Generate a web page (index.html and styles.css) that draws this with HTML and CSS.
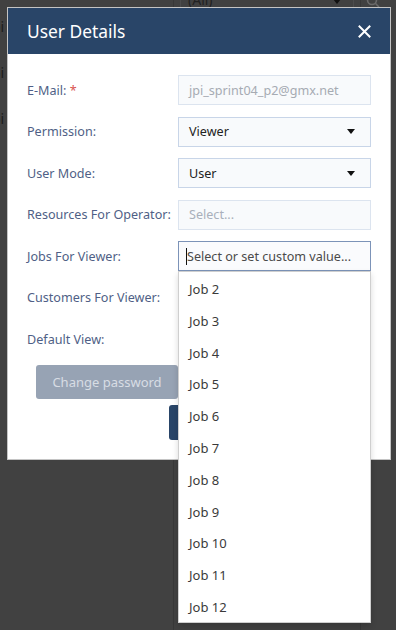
FILE: index.html
```html
<!DOCTYPE html>
<html>
<head>
<meta charset="utf-8">
<link rel="stylesheet" href="styles.css">
</head>
<body>
<div class="page">
  <div class="bg">
    <div class="bg-left">
      <span>pi</span>
      <span>pi</span>
      <span>pi</span>
    </div>
    <div class="bg-filter">
      <div class="bg-select">
        <span>(All)</span>
        <span class="bg-caret"></span>
      </div>
    </div>
    <div class="bg-search">
      <svg width="14" height="14" viewBox="0 0 14 14"><circle cx="6" cy="6" r="4.5" fill="none" stroke="#6a6a6a" stroke-width="1.6"/><line x1="9.3" y1="9.3" x2="13" y2="13" stroke="#6a6a6a" stroke-width="1.6"/></svg>
    </div>
  </div>

  <div class="modal">
    <div class="modal-header">
      <span class="modal-title">User Details</span>
      <svg class="close" width="13" height="13" viewBox="0 0 13 13"><path d="M1.5 1.5 L11.5 11.5 M11.5 1.5 L1.5 11.5" stroke="#ffffff" stroke-width="2" stroke-linecap="square"/></svg>
    </div>
    <div class="modal-body">
      <div class="row">
        <label class="label">E-Mail: <span class="req">*</span></label>
        <div class="field disabled">jpi_sprint04_p2@gmx.net</div>
      </div>
      <div class="row">
        <label class="label">Permission:</label>
        <div class="field select"><span>Viewer</span><span class="caret"></span></div>
      </div>
      <div class="row">
        <label class="label">User Mode:</label>
        <div class="field select"><span>User</span><span class="caret"></span></div>
      </div>
      <div class="row">
        <label class="label">Resources For Operator:</label>
        <div class="field placeholder">Select...</div>
      </div>
      <div class="row">
        <label class="label">Jobs For Viewer:</label>
        <div class="field focused"><span class="cursor"></span>Select or set custom value...</div>
      </div>
      <div class="row">
        <label class="label">Customers For Viewer:</label>
        <div class="field"></div>
      </div>
      <div class="row">
        <label class="label">Default View:</label>
        <div class="field"></div>
      </div>
      <div class="actions">
        <button class="btn btn-muted">Change password</button>
      </div>
      <div class="actions second">
        <button class="btn btn-primary" aria-label="Save"></button>
      </div>
    </div>
  </div>

  <ul class="dropdown">
    <li>Job 2</li>
    <li>Job 3</li>
    <li>Job 4</li>
    <li>Job 5</li>
    <li>Job 6</li>
    <li>Job 7</li>
    <li>Job 8</li>
    <li>Job 9</li>
    <li>Job 10</li>
    <li>Job 11</li>
    <li>Job 12</li>
  </ul>
</div>
</body>
</html>
```

FILE: styles.css
```css
* { box-sizing: border-box; }
html, body { margin: 0; padding: 0; }
body {
  background: #414141;
  font-family: "Noto Sans", "Open Sans", sans-serif;
  font-size: 12.6px;
}
.page {
  position: relative;
  width: 396px;
  height: 630px;
  overflow: hidden;
}
.bg {
  display: flex;
  height: 630px;
}
.bg-left {
  width: 181px;
  flex: none;
  display: flex;
  flex-direction: column;
  padding-top: 17px;
  gap: 26px;
  margin-left: -8px;
}
.bg-left span {
  color: #1c1c1c;
  font-size: 14px;
  line-height: 20px;
}
.bg-filter {
  width: 188px;
  flex: none;
  border-left: 1px solid #383838;
  border-right: 1px solid #383838;
  padding: 0 6px;
}
.bg-select {
  margin-top: -12px;
  height: 22px;
  border: 1px solid #4c4c4c;
  display: flex;
  align-items: center;
  justify-content: space-between;
  padding: 0 12px 0 7px;
  color: #222;
  font-size: 14px;
}
.bg-caret {
  width: 0; height: 0;
  border-left: 4px solid transparent;
  border-right: 4px solid transparent;
  border-top: 5px solid #111;
  margin-top: 4px;
}
.bg-search {
  padding: 0 0 0 5px;
  margin-top: -6px;
}

.modal {
  position: absolute;
  left: 7px;
  top: 7px;
  width: 384px;
  border: 1px solid #c4c4c4;
  background: #ffffff;
}
.modal-header {
  height: 46px;
  background: #294568;
  display: flex;
  align-items: center;
  justify-content: space-between;
  padding: 0 19px 0 19px;
}
.modal-title {
  color: #ffffff;
  font-size: 17.4px;
}
.close { display: block; }
.modal-body {
  padding: 21px 19px 19px 19px;
}
.row {
  display: grid;
  grid-template-columns: 151px 193px;
  align-items: center;
  height: 30px;
  margin-bottom: 11.5px;
}
.label {
  color: #4f5f86;
  white-space: nowrap;
}
.req { color: #d9534f; }
.field {
  height: 30px;
  border: 1px solid #dce4ef;
  background: #f8fafc;
  display: flex;
  align-items: center;
  padding: 0 10px;
  color: #222;
}
.disabled { color: #a6abb3; }
.placeholder { color: #a9b0bb; }
.select { justify-content: space-between; border-color: #c8d5e8; padding-right: 15px; }
.caret {
  width: 0; height: 0;
  border-left: 4px solid transparent;
  border-right: 4px solid transparent;
  border-top: 5px solid #111;
}
.focused {
  border-color: #7c93b8;
  background: #fafbfd;
  color: #4a4a4a;
  padding-left: 7px;
}
.cursor {
  width: 1px;
  height: 17px;
  background: #111;
}
.actions {
  display: flex;
  margin-top: -0.5px;
}
.btn {
  border: none;
  border-radius: 3px;
  font-family: inherit;
  font-size: 13px;
}
.btn-muted {
  margin-left: 9px;
  width: 142px;
  height: 34px;
  background: #97a3b4;
  color: #d8dde4;
}
.second { margin-top: 6px; }
.btn-primary {
  margin-left: 142px;
  width: 100px;
  height: 35px;
  background: #294568;
  color: #fff;
}

.dropdown {
  position: absolute;
  left: 178px;
  top: 271px;
  width: 193px;
  height: 352px;
  margin: 0;
  padding: 2px 0 0 0;
  list-style: none;
  background: #ffffff;
  border: 1px solid #cfcfcf;
  box-shadow: 0 3px 6px rgba(0,0,0,0.15);
}
.dropdown li {
  height: 31.8px;
  line-height: 31.8px;
  padding-left: 10px;
  color: #3a3a3a;
  font-size: 13px;
}
```
